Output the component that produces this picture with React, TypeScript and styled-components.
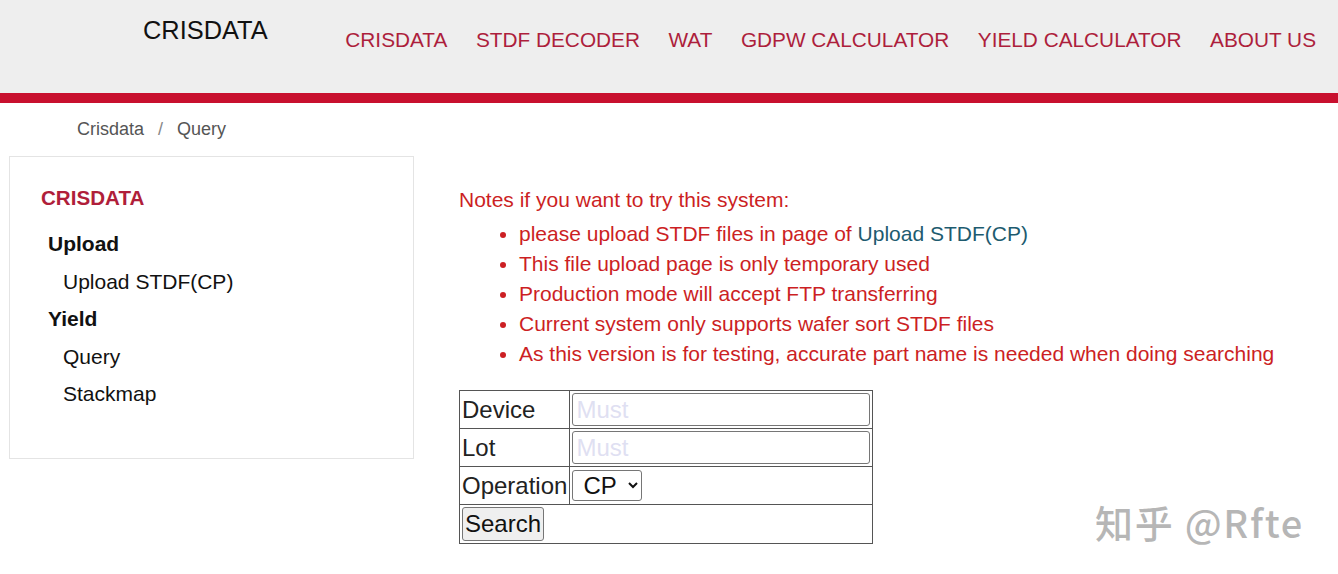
import styled, { createGlobalStyle } from "styled-components";

const GlobalStyle = createGlobalStyle`
  body {
    margin: 0;
    background: #fff;
    font-family: "Liberation Sans", Arial, sans-serif;
    color: #111;
  }
`;

const Page = styled.div`
  position: relative;
  width: 1338px;
  min-height: 574px;
`;

const Header = styled.header`
  height: 93px;
  background: #eeeeee;
  border-bottom: 10px solid #c8102e;
  display: flex;
  align-items: flex-start;
`;

const Logo = styled.div`
  padding: 15px 0 0 143px;
  font-size: 25.4px;
  line-height: 30px;
  color: #111;
`;

const Nav = styled.nav`
  margin-left: auto;
  padding: 28px 22px 0 0;
  display: flex;
  gap: 28.5px;
`;

const NavLink = styled.a`
  font-size: 20.8px;
  line-height: 24px;
  color: #ad1e3c;
  text-decoration: none;
`;

const Breadcrumb = styled.div`
  height: 53px;
  padding-left: 77px;
  display: flex;
  align-items: center;
  gap: 14px;
  font-size: 18px;
  color: #555;

  .sep {
    color: #888;
  }
`;

const Body = styled.div`
  display: flex;
  align-items: flex-start;
  padding-left: 9px;
`;

const Sidebar = styled.aside`
  width: 405px;
  box-sizing: border-box;
  border: 1px solid #e4e4e4;
  padding: 29px 0 45px 31px;
`;

const SideTitle = styled.div`
  font-size: 20.6px;
  line-height: 24px;
  font-weight: bold;
  color: #b01e3a;
  margin-bottom: 15px;
`;

const SideItem = styled.div<{ $group?: boolean }>`
  font-size: 21px;
  line-height: 37.5px;
  font-weight: ${(p) => (p.$group ? "bold" : "normal")};
  padding-left: ${(p) => (p.$group ? "7px" : "22px")};
  color: #111;
`;

const Main = styled.main`
  margin-left: 45px;
  padding-top: 29px;
`;

const Notes = styled.div`
  font-size: 21px;
  line-height: 30px;
  color: #cc1f24;
`;

const NoteList = styled.ul`
  margin: 4px 0 0;
  padding-left: 60px;
  font-size: 21px;
  line-height: 30px;
  color: #cc1f24;

  a {
    color: #1d5b6f;
    text-decoration: none;
  }
`;

const QueryTable = styled.table`
  margin-top: 21px;
  border-collapse: collapse;
  border: 1px solid #555;
  width: 414px;
  font-size: 24px;
  color: #222;

  td {
    border: 1px solid #555;
    padding: 2px;
    height: 33px;
  }
`;

const Label = styled.td`
  width: 1px;
  white-space: nowrap;
  padding: 0 2px !important;
`;

const TextInput = styled.input`
  width: 298px;
  height: 33px;
  box-sizing: border-box;
  font-size: 24px;
  font-family: "Liberation Sans", Arial, sans-serif;
  border: 1px solid #767676;
  border-radius: 3px;
  padding: 0 3px;

  &::placeholder {
    color: #dfe0f2;
  }
`;

const Select = styled.select`
  height: 31px;
  font-size: 24px;
  font-family: "Liberation Sans", Arial, sans-serif;
  border: 1px solid #767676;
  border-radius: 3px;
  background: #fff;
  color: #111;
  padding: 0 8px 0 6px;
`;

const SearchButton = styled.button`
  height: 34px;
  font-size: 24px;
  font-family: "Liberation Sans", Arial, sans-serif;
  background: #efefef;
  border: 1px solid #767676;
  border-radius: 3px;
  padding: 0 2px;
  color: #111;
`;

const Watermark = styled.div`
  position: absolute;
  left: 1095px;
  top: 494px;
  font-family: "Noto Sans CJK SC", "Liberation Sans", sans-serif;
  font-size: 38px;
  font-weight: 500;
  color: rgba(110, 110, 110, 0.5);
  text-shadow: 1px 1px 0 #fff, -1px 0 0 rgba(255, 255, 255, 0.9);
  letter-spacing: 1.7px;
`;

const navItems = [
  "CRISDATA",
  "STDF DECODER",
  "WAT",
  "GDPW CALCULATOR",
  "YIELD CALCULATOR",
  "ABOUT US",
];

const notes = [
  "This file upload page is only temporary used",
  "Production mode will accept FTP transferring",
  "Current system only supports wafer sort STDF files",
  "As this version is for testing, accurate part name is needed when doing searching",
];

export default function App() {
  return (
    <Page>
      <GlobalStyle />
      <Header>
        <Logo>CRISDATA</Logo>
        <Nav>
          {navItems.map((item) => (
            <NavLink key={item} href="#">
              {item}
            </NavLink>
          ))}
        </Nav>
      </Header>

      <Breadcrumb>
        <span>Crisdata</span>
        <span className="sep">/</span>
        <span>Query</span>
      </Breadcrumb>

      <Body>
        <Sidebar>
          <SideTitle>CRISDATA</SideTitle>
          <SideItem $group>Upload</SideItem>
          <SideItem>Upload STDF(CP)</SideItem>
          <SideItem $group>Yield</SideItem>
          <SideItem>Query</SideItem>
          <SideItem>Stackmap</SideItem>
        </Sidebar>

        <Main>
          <Notes>Notes if you want to try this system:</Notes>
          <NoteList>
            <li>
              please upload STDF files in page of <a href="#">Upload STDF(CP)</a>
            </li>
            {notes.map((n) => (
              <li key={n}>{n}</li>
            ))}
          </NoteList>

          <QueryTable>
            <tbody>
              <tr>
                <Label>Device</Label>
                <td>
                  <TextInput placeholder="Must" />
                </td>
              </tr>
              <tr>
                <Label>Lot</Label>
                <td>
                  <TextInput placeholder="Must" />
                </td>
              </tr>
              <tr>
                <Label>Operation</Label>
                <td>
                  <Select defaultValue="CP">
                    <option value="CP">CP</option>
                    <option value="FT">FT</option>
                  </Select>
                </td>
              </tr>
              <tr>
                <td colSpan={2}>
                  <SearchButton>Search</SearchButton>
                </td>
              </tr>
            </tbody>
          </QueryTable>
        </Main>
      </Body>

      <Watermark>知乎 @Rfte</Watermark>
    </Page>
  );
}
